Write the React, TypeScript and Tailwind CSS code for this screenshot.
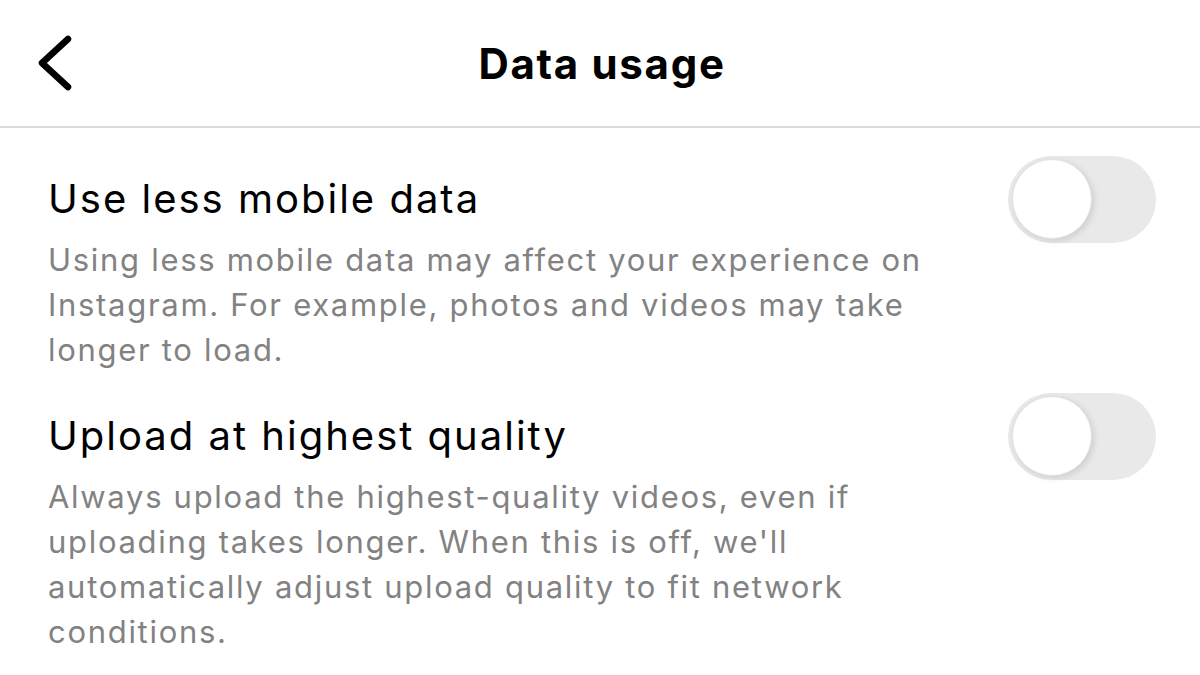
const ROWS = [
  {
    title: "Use less mobile data",
    lines: [
      "Using less mobile data may affect your experience on",
      "Instagram. For example, photos and videos may take",
      "longer to load.",
    ],
  },
  {
    title: "Upload at highest quality",
    lines: [
      "Always upload the highest-quality videos, even if",
      "uploading takes longer. When this is off, we'll",
      "automatically adjust upload quality to fit network",
      "conditions.",
    ],
  },
];

function Toggle() {
  return (
    <div className="w-[148px] h-[87px] rounded-full bg-[#e9e9ea] p-[4px] flex items-center shrink-0">
      <div className="w-[80px] h-[80px] rounded-full bg-white border border-[#e3e3e3] shadow-[2px_2px_6px_rgba(0,0,0,0.12)]" />
    </div>
  );
}

export default function App() {
  return (
    <div className="w-[1200px] h-[675px] bg-white overflow-hidden font-['Inter',sans-serif] text-black">
      <header className="h-[128px] border-b-2 border-[#dbdbdb] flex items-center relative">
        <button className="absolute left-[36px] top-[33px] text-black">
          <svg width="38" height="60" viewBox="0 0 38 60" fill="none">
            <polyline
              points="32,6 6,30 32,54"
              stroke="currentColor"
              strokeWidth="6.5"
              strokeLinecap="round"
              strokeLinejoin="round"
            />
          </svg>
        </button>
        <h1 className="w-full text-center text-[42px] font-bold tracking-[1.7px] pl-[4px]">Data usage</h1>
      </header>

      <main className="pl-[48px] pr-[44px] pt-[47px] flex flex-col gap-[40px]">
        {ROWS.map((row) => (
          <section key={row.title} className="flex flex-col gap-[14px]">
            <div className="flex items-center justify-between h-[48px]">
              <h2 className="text-[40px] leading-[48px] font-normal tracking-[2px]">{row.title}</h2>
              <Toggle />
            </div>
            <p className="text-[31px] leading-[45px] text-[#828282] tracking-[1.7px]">
              {row.lines.map((l) => (
                <span key={l} className="block">
                  {l}
                </span>
              ))}
            </p>
          </section>
        ))}
      </main>
    </div>
  );
}
